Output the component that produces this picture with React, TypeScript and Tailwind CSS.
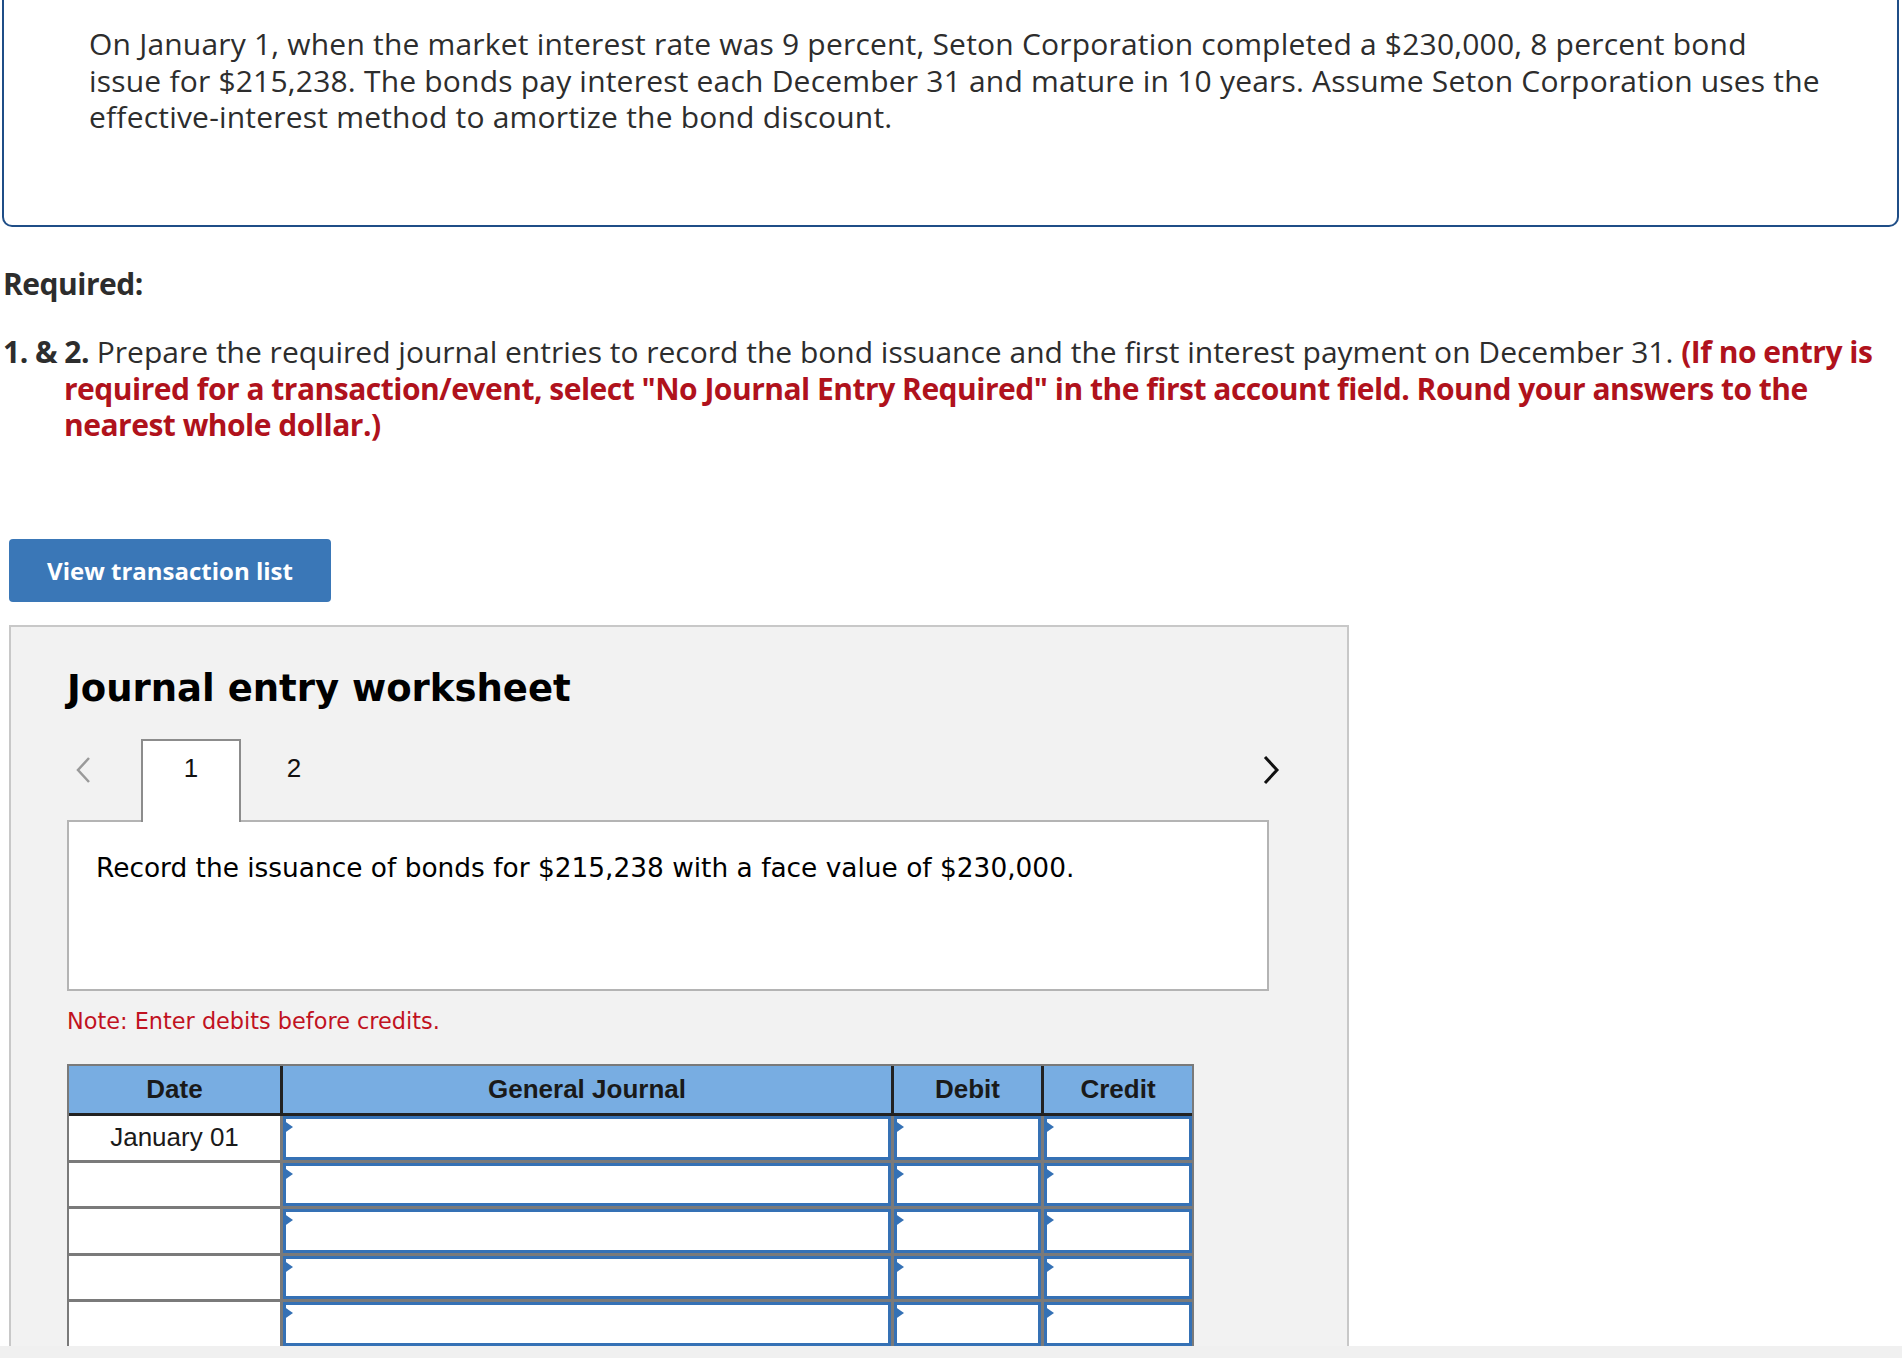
import React from "react";

const body = { fontFamily: "'Open Sans', Lato, sans-serif" };
const verdana = { fontFamily: "'DejaVu Sans', Verdana, sans-serif" };
const arial = { fontFamily: "'Liberation Sans', Arial, sans-serif" };

function Tri() {
  return (
    <span className="absolute left-[-3px] top-[1px] w-0 h-0 border-y-[7px] border-y-transparent border-l-[10px] border-l-[#3571b5]" />
  );
}

function InputCell() {
  return (
    <div className="relative bg-white border-[3px] border-[#3571b5]">
      <Tri />
    </div>
  );
}

export default function App() {
  const rows = [0, 1, 2, 3, 4, 5, 6];
  return (
    <div className="w-[1902px] h-[1358px] overflow-hidden bg-white flex flex-col" style={body}>
      <div className="flex-1 overflow-hidden pl-[2px] pr-[3px]">
        <div className="h-[227px] border-x-2 border-b-2 border-[#1f4e87] rounded-b-[10px] pt-[26px] pl-[85px] text-[30px] leading-[36.7px] tracking-[0.2px] text-[#2d2d2d]">
          On January 1, when the market interest rate was 9 percent, Seton Corporation completed a $230,000, 8 percent bond
          <br />
          issue for $215,238. The bonds pay interest each December 31 and mature in 10 years. Assume Seton Corporation uses the
          <br />
          effective-interest method to amortize the bond discount.
        </div>

        <div className="mt-[38px] pl-[1px] text-[30px] leading-[37px] font-bold tracking-[-0.5px] text-[#2d2d2d]">Required:</div>

        <div className="mt-[32px] pl-[62px] indent-[-61px] text-[30px] leading-[36.7px] text-[#2d2d2d]">
          <span className="font-bold tracking-[-0.5px]">1. &amp; 2.</span> Prepare the required journal entries to record the bond issuance and the first interest payment on December 31.{" "}
          <span className="font-bold tracking-[-0.5px] text-[#b0121c]">
            (If no entry is
            <br />
            required for a transaction/event, select "No Journal Entry Required" in the first account field. Round your answers to the
            <br />
            nearest whole dollar.)
          </span>
        </div>

        <button className="mt-[95px] ml-[7px] w-[322px] h-[63px] bg-[#3a77b7] rounded-[4px] text-white font-bold text-[24px] flex items-center justify-center">
          View transaction list
        </button>

        <div className="mt-[23px] ml-[7px] w-[1340px] h-[800px] border-2 border-[#c8c8c8] bg-[#f2f2f2] pl-[56px] pt-[40px]">
          <div className="text-[37px] leading-[44px] font-bold text-black" style={verdana}>
            Journal entry worksheet
          </div>

          <div className="mt-[28px] w-[1202px] h-[81px] flex items-stretch relative z-10">
            <div className="w-[74px] flex items-start pt-[17px] pl-[8px]">
              <svg width="16" height="28" viewBox="0 0 16 28">
                <polyline points="14,2 3,14 14,26" fill="none" stroke="#9a9a9a" strokeWidth="2.5" />
              </svg>
            </div>
            <div className="w-[100px] h-[83px] bg-white border-2 border-b-0 border-[#8c8c8c] flex justify-center pt-[12px] text-[26px] leading-[30px] text-[#111]" style={arial}>
              1
            </div>
            <div className="w-[106px] flex justify-center pt-[14px] text-[26px] leading-[30px] text-[#111]" style={arial}>
              2
            </div>
            <div className="flex-1" />
            <div className="w-[20px] flex items-start pt-[16px] mr-[-14px]">
              <svg width="17" height="30" viewBox="0 0 17 30">
                <polyline points="2,2 14,15 2,28" fill="none" stroke="#111" strokeWidth="3" />
              </svg>
            </div>
          </div>

          <div className="w-[1202px] h-[171px] bg-white border-2 border-[#b4b4b4] pt-[29px] pl-[27px] text-[26.4px] leading-[34px] text-black" style={verdana}>
            Record the issuance of bonds for $215,238 with a face value of $230,000.
          </div>

          <div className="mt-[15px] text-[22.4px] leading-[30px] text-[#c1121f]" style={verdana}>
            Note: Enter debits before credits.
          </div>

          <div className="mt-[28px] w-[1127px] border-2 border-[#7a7a7a] bg-[#7a7a7a]" style={arial}>
            <div className="grid grid-cols-[211px_608px_147px_148px] gap-x-[3px] bg-[#222] border-b-[3px] border-[#222]">
              {["Date", "General Journal", "Debit", "Credit"].map((h) => (
                <div key={h} className="h-[47px] bg-[#78ade2] flex items-center justify-center text-[26px] font-bold text-[#1a1a1a]">
                  {h}
                </div>
              ))}
            </div>
            <div className="grid grid-cols-[211px_608px_147px_148px] gap-x-[3px] gap-y-[3px] auto-rows-[43.5px]">
              {rows.map((r) => (
                <React.Fragment key={r}>
                  <div className="bg-white flex items-center justify-center text-[26px] text-[#1a1a1a]">
                    {r === 0 ? "January 01" : ""}
                  </div>
                  <InputCell />
                  <InputCell />
                  <InputCell />
                </React.Fragment>
              ))}
            </div>
          </div>
        </div>
      </div>
      <div className="h-[12px] bg-[#f0f0f0]" />
    </div>
  );
}
